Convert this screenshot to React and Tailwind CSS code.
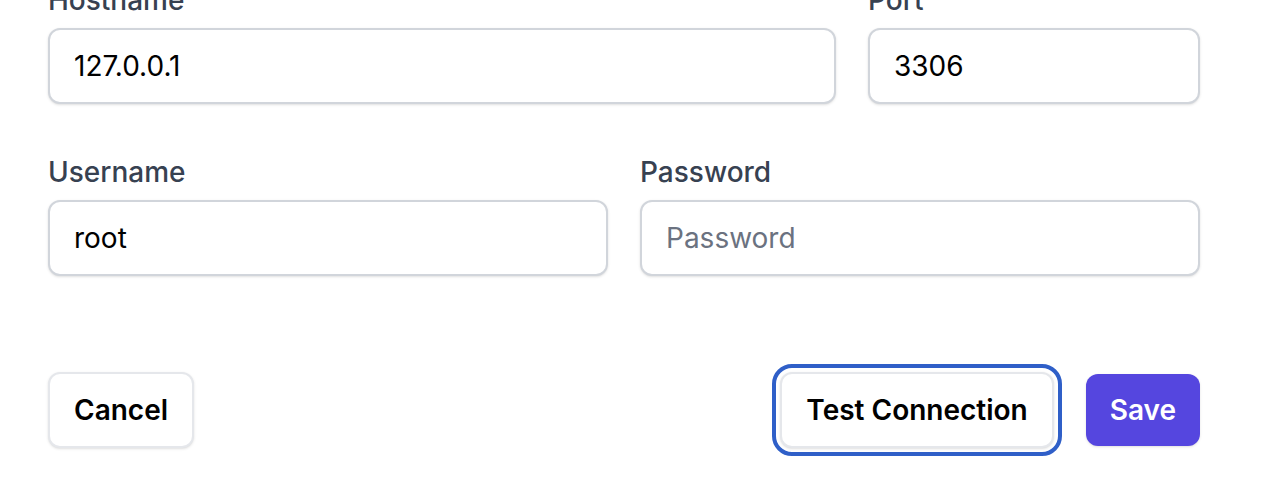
import React from "react";

function Field({ label, value, placeholder, className = "" }) {
  return (
    <div className={"flex flex-col " + className}>
      <label className="mb-2 text-[28px] leading-[40px] font-medium text-[#374151]">{label}</label>
      <input
        defaultValue={value}
        placeholder={placeholder}
        className="h-[76px] w-full rounded-xl border-2 border-[#d1d5db] bg-white px-6 text-[28px] leading-[40px] text-black shadow-sm outline-none placeholder:text-[#6b7280]"
      />
    </div>
  );
}

export default function App() {
  return (
    <div className="h-[504px] w-[1264px] overflow-hidden bg-white" style={{ fontFamily: "Inter, 'Noto Sans', sans-serif" }}>
      <div className="-mt-[20px] pl-12 pr-16">
        <div className="flex gap-8">
          <Field label="Hostname" value="127.0.0.1" className="flex-1" />
          <Field label="Port" value="3306" className="w-[332px]" />
        </div>
        <div className="mt-12 grid grid-cols-2 gap-8">
          <Field label="Username" value="root" />
          <Field label="Password" placeholder="Password" />
        </div>
        <div className="mt-[96px] flex items-center justify-between">
          <button className="h-[76px] rounded-xl border-2 border-[#e5e7eb] bg-white px-6 text-[28px] font-semibold text-black shadow-sm">
            Cancel
          </button>
          <div className="flex items-center gap-8">
            <button className="h-[76px] rounded-xl border-2 border-[#e5e7eb] bg-white px-6 text-[28px] font-semibold text-black shadow-sm outline-4 outline-offset-4 outline-[#2f5fc8]" style={{ outlineStyle: "solid" }}>
              Test Connection
            </button>
            <button className="h-[72px] rounded-xl bg-[#5546df] px-6 text-[28px] font-semibold text-white shadow-sm">
              Save
            </button>
          </div>
        </div>
      </div>
    </div>
  );
}
